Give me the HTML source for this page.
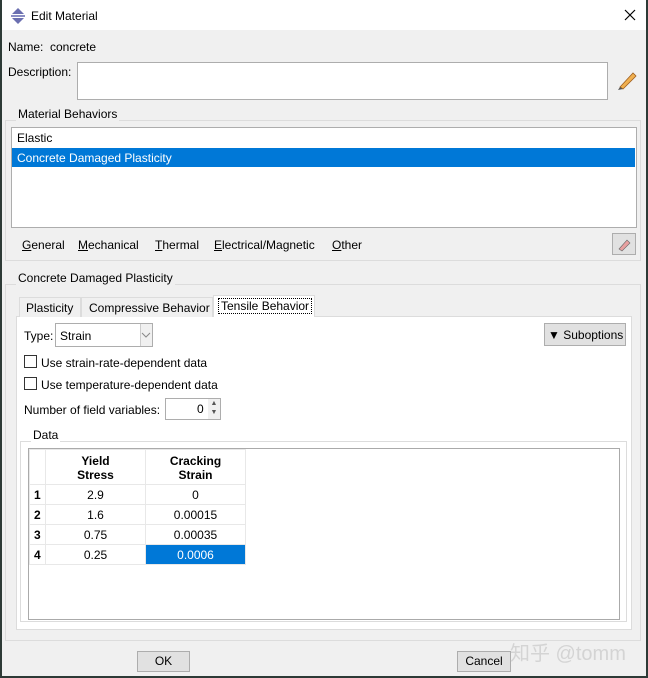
<!DOCTYPE html>
<html><head><meta charset="utf-8"><style>
*{box-sizing:border-box;margin:0;padding:0}
body{width:648px;height:678px;background:#f0f0f0;font-family:"Liberation Sans","Noto Sans CJK SC",sans-serif;font-size:12px;color:#000;position:relative;overflow:hidden}
.a{position:absolute;white-space:nowrap}
.box{position:absolute;border:1px solid #dcdcdc}
.lbl{position:absolute;background:#f0f0f0;padding:0 2px;white-space:nowrap}
.btn{position:absolute;background:#e1e1e1;border:1px solid #adadad;text-align:center}
.cb{position:absolute;width:13px;height:13px;border:1px solid #333;background:#fff}
table{border-collapse:collapse;position:absolute}
td{border:1px solid #e8e8e8;text-align:center;height:20px;font-size:12px}
u{text-decoration:underline}
</style></head><body>
<div class="a" style="left:0;top:0;width:648px;height:30px;background:#fff"></div>
<div class="a" style="left:0;top:0;width:2px;height:678px;background:#2d3a36"></div>
<div class="a" style="left:646px;top:0;width:2px;height:678px;background:#2d3a36"></div>
<div class="a" style="left:0;top:676px;width:648px;height:2px;background:#2d3a36"></div>
<svg class="a" style="left:10px;top:8px" width="16" height="16"><polygon points="8,0 14,6 2,6" fill="#6b6fb0"/><rect x="1" y="7" width="14" height="2" fill="#8a8ec4"/><polygon points="8,16 14,10 2,10" fill="#6b6fb0"/></svg>
<div class="a" style="left:31px;top:9px;font-size:12px">Edit Material</div>
<svg class="a" style="left:624px;top:9px" width="12" height="12"><path d="M1 1L11 11M11 1L1 11" stroke="#000" stroke-width="1.2"/></svg>

<div class="a" style="left:8px;top:40px">Name:&nbsp;&nbsp;concrete</div>
<div class="a" style="left:8px;top:65px">Description:</div>
<div class="a" style="left:77px;top:62px;width:531px;height:38px;background:#fff;border:1px solid #adadad"></div>
<svg class="a" style="left:616px;top:69px" width="22" height="22"><path d="M4 18L17 4L20 7L7 20Z" fill="#f0b050" stroke="#a06020" stroke-width="0.8"/><path d="M4 18L7 20L2 21Z" fill="#555"/></svg>

<div class="box" style="left:5px;top:120px;width:636px;height:141px"></div>
<div class="lbl" style="left:16px;top:107px">Material Behaviors</div>
<div class="a" style="left:11px;top:127px;width:626px;height:101px;background:#fff;border:1px solid #adadad"></div>
<div class="a" style="left:17px;top:131px">Elastic</div>
<div class="a" style="left:12px;top:148px;width:623px;height:19px;background:#0078d7"></div>
<div class="a" style="left:17px;top:151px;color:#fff">Concrete Damaged Plasticity</div>
<div class="a" style="left:22px;top:238px"><u>G</u>eneral</div>
<div class="a" style="left:78px;top:238px"><u>M</u>echanical</div>
<div class="a" style="left:155px;top:238px"><u>T</u>hermal</div>
<div class="a" style="left:214px;top:238px"><u>E</u>lectrical/Magnetic</div>
<div class="a" style="left:332px;top:238px"><u>O</u>ther</div>
<div class="btn" style="left:612px;top:233px;width:24px;height:22px"></div>
<svg class="a" style="left:616px;top:236px" width="16" height="16"><path d="M3 13L11 4L14 7L6 15Z" fill="#e8a0a0" stroke="#666" stroke-width="0.6"/></svg>

<div class="box" style="left:5px;top:284px;width:636px;height:357px"></div>
<div class="lbl" style="left:16px;top:271px">Concrete Damaged Plasticity</div>
<div class="a" style="left:16px;top:316px;width:616px;height:314px;background:#fff;border:1px solid #dcdcdc"></div>
<div class="a" style="left:19px;top:297px;width:62px;height:20px;border:1px solid #dcdcdc;border-bottom:none;background:#f0f0f0"></div>
<div class="a" style="left:26px;top:301px">Plasticity</div>
<div class="a" style="left:81px;top:297px;width:132px;height:20px;border:1px solid #dcdcdc;border-bottom:none;background:#f0f0f0"></div>
<div class="a" style="left:89px;top:301px">Compressive Behavior</div>
<div class="a" style="left:213px;top:295px;width:102px;height:22px;border:1px solid #dcdcdc;border-bottom:none;background:#fff"></div>
<div class="a" style="left:218px;top:298px;border:1px dotted #000;padding:0 2px">Tensile Behavior</div>

<div class="a" style="left:24px;top:329px">Type:</div>
<div class="a" style="left:55px;top:323px;width:98px;height:24px;background:#fff;border:1px solid #adadad"></div>
<div class="a" style="left:60px;top:329px">Strain</div>
<div class="a" style="left:140px;top:324px;width:12px;height:22px;background:#f0f0f0;border-left:1px solid #ccc"></div>
<svg class="a" style="left:141px;top:331px" width="10" height="8"><path d="M1 2L5 6L9 2" stroke="#888" fill="none"/></svg>
<div class="btn" style="left:544px;top:323px;width:82px;height:23px"></div>
<div class="a" style="left:548px;top:328px">▼ Suboptions</div>
<div class="cb" style="left:24px;top:355px"></div>
<div class="a" style="left:41px;top:356px">Use strain-rate-dependent data</div>
<div class="cb" style="left:24px;top:377px"></div>
<div class="a" style="left:41px;top:378px">Use temperature-dependent data</div>
<div class="a" style="left:24px;top:403px">Number of field variables:</div>
<div class="a" style="left:165px;top:398px;width:56px;height:22px;background:#fff;border:1px solid #adadad"></div>
<div class="a" style="left:197px;top:402px">0</div>
<div class="a" style="left:208px;top:399px;width:12px;height:20px;background:#f0f0f0;font-size:7px;line-height:9px;text-align:center;color:#555">▲<br>▼</div>

<div class="box" style="left:20px;top:441px;width:607px;height:181px"></div>
<div class="lbl" style="left:31px;top:428px;background:#fff">Data</div>
<div class="a" style="left:28px;top:448px;width:592px;height:172px;background:#fff;border:1px solid #aaa"></div>
<table style="left:29px;top:449px">
<tr><td style="width:16px;height:35px;background:#fff"></td><td style="width:100px;font-weight:bold;line-height:14px;padding-top:2px">Yield<br>Stress</td><td style="width:100px;font-weight:bold;line-height:14px;padding-top:2px">Cracking<br>Strain</td></tr>
<tr><td style="font-weight:bold;text-align:left;padding-left:4px">1</td><td>2.9</td><td>0</td></tr>
<tr><td style="font-weight:bold;text-align:left;padding-left:4px">2</td><td>1.6</td><td>0.00015</td></tr>
<tr><td style="font-weight:bold;text-align:left;padding-left:4px">3</td><td>0.75</td><td>0.00035</td></tr>
<tr><td style="font-weight:bold;text-align:left;padding-left:4px">4</td><td>0.25</td><td style="background:#0078d7;color:#fff">0.0006</td></tr>
</table>

<div class="btn" style="left:137px;top:651px;width:53px;height:21px;line-height:19px">OK</div>
<div class="btn" style="left:457px;top:651px;width:54px;height:21px;line-height:19px">Cancel</div>
<div class="a" style="left:510px;top:637px;font-size:20px;color:rgba(205,205,205,0.8)">知乎 @tomm</div>
</body></html>
